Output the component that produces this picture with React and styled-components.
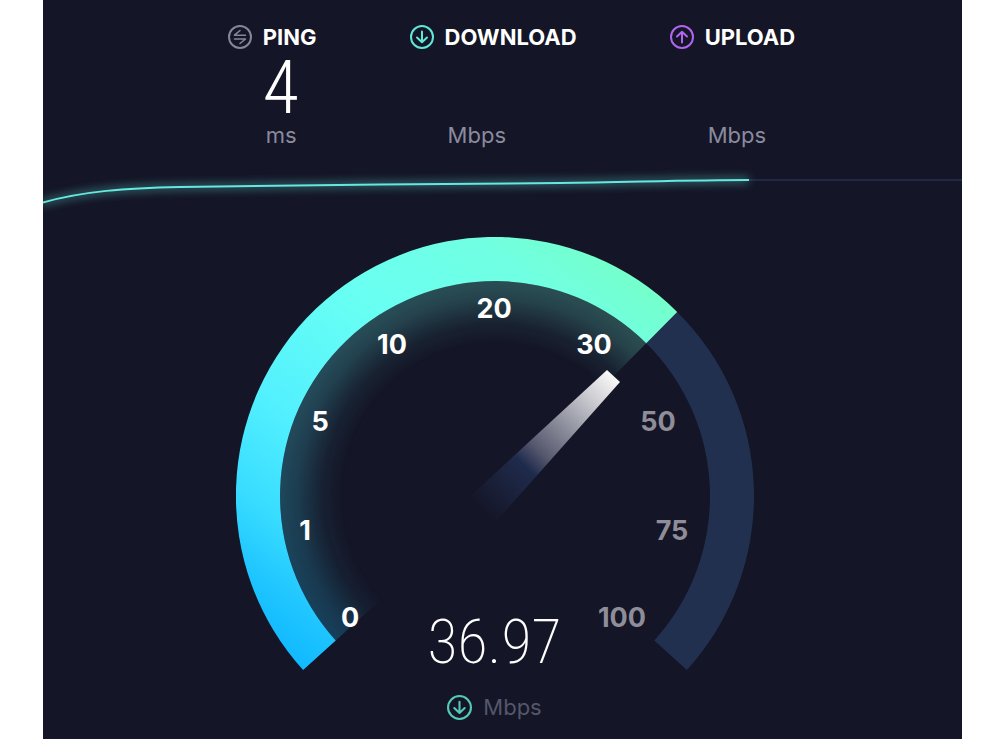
import React from "react";
import styled, { createGlobalStyle } from "styled-components";

const GlobalStyle = createGlobalStyle`
  body {
    margin: 0;
    background: #ffffff;
    font-family: Inter, "Liberation Sans", sans-serif;
  }
`;

const Panel = styled.main`
  display: flex;
  flex-direction: column;
  margin: 0 38px 2px 43px;
  padding-bottom: 18px;
  background: #141526;
  color: #ffffff;
  overflow: hidden;
`;

const Metrics = styled.section`
  display: flex;
  justify-content: center;
  gap: 93px;
  padding: 23px 0 0 18px;
`;

const Metric = styled.div`
  display: grid;
  grid-template-columns: 24px auto;
  grid-template-rows: 28px 70px 28px;
  column-gap: 11px;
  align-items: center;
`;

const MetricLabel = styled.h2`
  margin: 0;
  font-size: 22px;
  line-height: 28px;
  font-weight: 700;
`;

const MetricValue = styled.div`
  grid-column: 2;
  padding-top: 4px;
  font-family: "Roboto Condensed", Roboto, sans-serif;
  font-size: 74px;
  line-height: 70px;
  font-weight: 300;
`;

const Unit = styled.span`
  grid-column: 2;
  padding-left: 3px;
  font-size: 22px;
  line-height: 28px;
  color: ${(p) => (p.$dim ? "#55566a" : "#8a8b9e")};
`;

const Icon = styled.svg`
  display: block;
  width: ${(p) => p.$size}px;
  height: ${(p) => p.$size}px;
  fill: none;
  stroke: ${(p) => p.$color};
  stroke-width: 2;
  stroke-linecap: round;
  stroke-linejoin: round;
`;

const Wave = styled.svg`
  display: block;
  width: 100%;
  height: 61px;
  margin-top: 11px;
`;

const GaugeArea = styled.section`
  display: flex;
  flex-direction: column;
  align-items: center;
  margin-top: 16px;
  padding-right: 16px;
`;

const Gauge = styled.div`
  display: grid;
  width: 100%;
  max-width: 518px;
  justify-items: center;
`;

const Dial = styled.svg`
  grid-area: 1 / 1;
  display: block;
  width: 100%;
`;

const DialText = styled.text`
  font-size: 27px;
  font-weight: 700;
  text-anchor: middle;
  fill: ${(p) => (p.$reached ? "#ffffff" : "#8e8d98")};
`;

const Reading = styled.output`
  grid-area: 1 / 1;
  align-self: end;
  font-family: "Roboto Condensed", Roboto, sans-serif;
  font-size: 62px;
  line-height: 56px;
  font-weight: 200;
`;

const ReadingUnit = styled.div`
  display: flex;
  align-items: center;
  gap: 8px;
  margin-top: 23px;
`;

function PingIcon() {
  return (
    <Icon $size={24} $color="#85869a" viewBox="0 0 24 24" aria-hidden="true">
      <circle cx="12" cy="12" r="11" />
      <path d="M12 5.5L6.5 10.2H17.5M6.5 14H17.5L12 18.5" strokeWidth="1.6" />
    </Icon>
  );
}

function ArrowIcon({ size, color, up }) {
  return (
    <Icon $size={size} $color={color} viewBox="0 0 24 24" aria-hidden="true">
      <circle cx="12" cy="12" r="11" />
      <path d={up ? "M12 17.5V7M7 11.5l5-4.7 5 4.7" : "M12 6.5V17M7 12.5l5 4.7 5-4.7"} />
    </Icon>
  );
}

const ticks = [
  { label: "0", x: -145, y: 131, reached: true },
  { label: "1", x: -190, y: 44, reached: true },
  { label: "5", x: -175, y: -65, reached: true },
  { label: "10", x: -103, y: -142, reached: true },
  { label: "20", x: -1, y: -178, reached: true },
  { label: "30", x: 99, y: -142, reached: true },
  { label: "50", x: 163, y: -65, reached: false },
  { label: "75", x: 177, y: 44, reached: false },
  { label: "100", x: 127, y: 131, reached: false },
];

const OUTER = 259;
const INNER = 215;
const START = 137.8;
const CURRENT = 314.7;
const END = 402.2;

const point = (radius, degrees) => {
  const a = (degrees * Math.PI) / 180;
  return `${(radius * Math.cos(a)).toFixed(2)} ${(radius * Math.sin(a)).toFixed(2)}`;
};

const ring = (from, to) =>
  `M${point(OUTER, from)}A${OUTER} ${OUTER} 0 0 1 ${point(OUTER, to)}` +
  `L${point(INNER, to)}A${INNER} ${INNER} 0 0 0 ${point(INNER, from)}Z`;

const sector = (from, to) =>
  `M0 0L${point(INNER, from)}A${INNER} ${INNER} 0 0 1 ${point(INNER, to)}Z`;

function SpeedDial() {
  return (
    <Dial viewBox="-259 -259 518 433" role="img" aria-label="Download speed dial">
      <defs>
        <linearGradient id="progress" gradientUnits="userSpaceOnUse" x1="-195" y1="174" x2="112" y2="-236">
          <stop offset="0" stopColor="#10b8ff" />
          <stop offset="0.1" stopColor="#20c6ff" />
          <stop offset="0.21" stopColor="#38dcff" />
          <stop offset="0.38" stopColor="#52f0ff" />
          <stop offset="0.64" stopColor="#68fff3" />
          <stop offset="0.88" stopColor="#70ffe2" />
          <stop offset="1" stopColor="#74ffcc" />
        </linearGradient>
        <radialGradient id="fade" gradientUnits="userSpaceOnUse" cx="0" cy="0" r="216">
          <stop offset="0.7" stopColor="#fff" stopOpacity="0" />
          <stop offset="0.8" stopColor="#fff" stopOpacity="0.06" />
          <stop offset="0.92" stopColor="#fff" stopOpacity="0.2" />
          <stop offset="1" stopColor="#fff" stopOpacity="0.25" />
        </radialGradient>
        <mask id="glowMask" maskUnits="userSpaceOnUse" x="-259" y="-259" width="518" height="433">
          <circle r="216" fill="url(#fade)" />
        </mask>
        <linearGradient id="needle" gradientUnits="userSpaceOnUse" x1="118" y1="-120" x2="-15" y2="16">
          <stop offset="0" stopColor="#f8f8f8" />
          <stop offset="0.15" stopColor="#d0d0d5" />
          <stop offset="0.55" stopColor="#56586e" />
          <stop offset="0.66" stopColor="#1f2b4c" />
          <stop offset="1" stopColor="#1f2b4c" stopOpacity="0" />
        </linearGradient>
      </defs>
      <path d={ring(CURRENT, END)} fill="#22304f" />
      <path d={sector(START, CURRENT)} fill="url(#progress)" mask="url(#glowMask)" />
      <path d={ring(START, CURRENT)} fill="url(#progress)" />
      <path d="M112-126L125-114L-3 30L-29 4Z" fill="url(#needle)" />
      {ticks.map((t) => (
        <DialText key={t.label} x={t.x} y={t.y} $reached={t.reached}>
          {t.label}
        </DialText>
      ))}
    </Dial>
  );
}

export default function App() {
  return (
    <>
      <GlobalStyle />
      <Panel>
        <Metrics>
          <Metric>
            <PingIcon />
            <MetricLabel>PING</MetricLabel>
            <MetricValue>4</MetricValue>
            <Unit>ms</Unit>
          </Metric>
          <Metric>
            <ArrowIcon size={24} color="#5fe8d8" />
            <MetricLabel>DOWNLOAD</MetricLabel>
            <MetricValue />
            <Unit>Mbps</Unit>
          </Metric>
          <Metric>
            <ArrowIcon size={24} color="#b065f0" up />
            <MetricLabel>UPLOAD</MetricLabel>
            <MetricValue />
            <Unit>Mbps</Unit>
          </Metric>
        </Metrics>
        <Wave viewBox="0 0 919 61" preserveAspectRatio="none" aria-hidden="true">
          <defs>
            <filter id="lineGlow" filterUnits="userSpaceOnUse" x="-20" y="-10" width="960" height="81">
              <feGaussianBlur stdDeviation="4" />
            </filter>
          </defs>
          <path d="M706 20H919" stroke="#1f2947" strokeWidth="2" />
          <g fill="none" stroke="#66e8e0">
            <path d="M-2 43C40 31 84 28 137 27C250 25 400 24 517 23C590 22 650 20 706 20" strokeWidth="7" opacity="0.35" filter="url(#lineGlow)" />
            <path d="M-2 43C40 31 84 28 137 27C250 25 400 24 517 23C590 22 650 20 706 20" strokeWidth="2" />
          </g>
        </Wave>
        <GaugeArea>
          <Gauge>
            <SpeedDial />
            <Reading>36.97</Reading>
          </Gauge>
          <ReadingUnit>
            <ArrowIcon size={25} color="#55c9b8" />
            <Unit $dim>Mbps</Unit>
          </ReadingUnit>
        </GaugeArea>
      </Panel>
    </>
  );
}
